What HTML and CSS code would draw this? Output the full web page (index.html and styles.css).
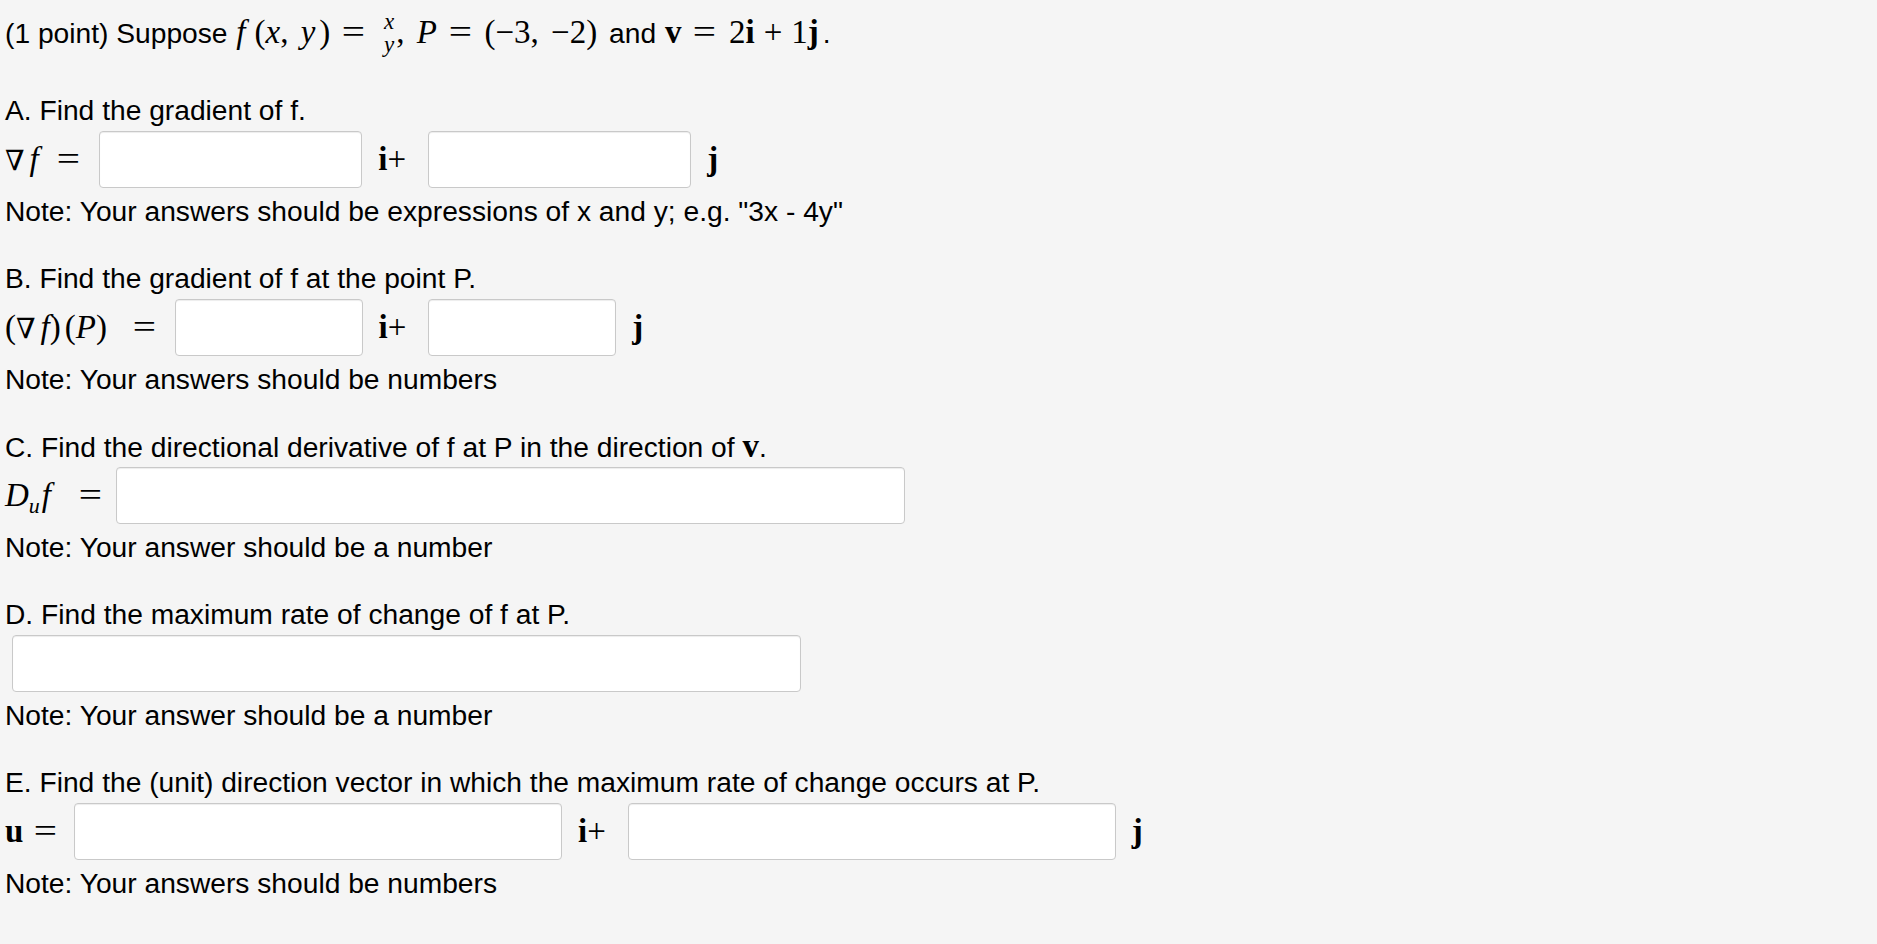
FILE: index.html
```html
<!DOCTYPE html>
<html>
<head>
<meta charset="utf-8">
<link rel="stylesheet" href="styles.css">
</head>
<body>
<div class="problem">
  <p class="title">(1 point) Suppose <span class="m"><i>f</i><span class="sp"></span>(<i>x</i>,<span class="cs"></span> <i class="ic">y</i>)<span class="rel">=</span><span class="frac"><span class="num"><i>x</i></span><span class="den"><i>y</i></span></span>,<span class="cs"></span> <i>P</i><span class="rel">=</span>(−3,<span class="cs"></span> −2)</span> and <span class="m"><b>v</b><span class="rel">=</span>2<b>i</b><span class="bin">+</span>1<b>j</b></span>.</p>

  <section class="part">
    <div class="q">A. Find the gradient of f.</div>
    <div class="row">
      <span class="m lab"><span class="nabla">∇</span><i>f</i><span class="rel r-a">=</span></span>
      <input class="ans w-a" type="text">
      <span class="m unit"><b>i</b>+</span>
      <input class="ans w-a" type="text">
      <span class="m unit"><b>j</b></span>
    </div>
    <div class="note">Note: Your answers should be expressions of x and y; e.g. "3x - 4y"</div>
  </section>

  <section class="part">
    <div class="q">B. Find the gradient of f at the point P.</div>
    <div class="row">
      <span class="m lab">(<span class="nabla">∇</span><i>f</i>)<span class="sp-s"></span>(<i>P</i>)<span class="rel r-b">=</span></span>
      <input class="ans w-b" type="text">
      <span class="m unit"><b>i</b>+</span>
      <input class="ans w-b" type="text">
      <span class="m unit"><b>j</b></span>
    </div>
    <div class="note">Note: Your answers should be numbers</div>
  </section>

  <section class="part">
    <div class="q">C. Find the directional derivative of f at P in the direction of <span class="m"><b>v</b></span>.</div>
    <div class="row">
      <span class="m lab"><i>D</i><sub><i>u</i></sub><i>f</i><span class="rel r-c">=</span></span>
      <input class="ans w-c" type="text">
    </div>
    <div class="note">Note: Your answer should be a number</div>
  </section>

  <section class="part">
    <div class="q">D. Find the maximum rate of change of f at P.</div>
    <div class="row">
      <input class="ans w-d" type="text">
    </div>
    <div class="note">Note: Your answer should be a number</div>
  </section>

  <section class="part">
    <div class="q">E. Find the (unit) direction vector in which the maximum rate of change occurs at P.</div>
    <div class="row">
      <span class="m lab"><b>u</b><span class="rel r-e">=</span></span>
      <input class="ans w-e" type="text">
      <span class="m unit"><b>i</b>+</span>
      <input class="ans w-e" type="text">
      <span class="m unit"><b>j</b></span>
    </div>
    <div class="note">Note: Your answers should be numbers</div>
  </section>
</div>
</body>
</html>
```

FILE: styles.css
```css
html, body {
  margin: 0;
  padding: 0;
  background: #f5f5f5;
}

body {
  font-family: "Liberation Sans", Arial, sans-serif;
  font-size: 28.2px;
  color: #000;
}

.problem {
  padding: 0 0 0 5px;
}

.title {
  margin: 0;
  padding-top: 12px;
  height: 83px;
  line-height: 36px;
}

.title .m {
  margin: 0 4px 0 1px;
}

.m {
  font-family: "Liberation Serif", "Times New Roman", serif;
  font-size: 33px;
}

.m i {
  font-style: italic;
}

.m b {
  font-weight: bold;
}

.ic {
  margin-right: 4px;
}

.nabla {
  font-family: "DejaVu Serif", "Liberation Serif", serif;
  font-size: 28px;
  font-weight: normal;
  margin-right: 5px;
}

.sp {
  display: inline-block;
  width: 9px;
}

.sp-s {
  display: inline-block;
  width: 4px;
}

.cs {
  display: inline-block;
  width: 4px;
}

.rel {
  display: inline-block;
  margin: 0 15px 0 14px;
  transform: scaleX(1.25);
}

.r-a { margin: 0 9px 0 20px; }
.r-b { margin: 0 8px 0 28px; }
.r-c { margin: 0 3px 0 30px; }
.r-e { margin: 0 6px 0 13px; }

.bin {
  display: inline-block;
  margin: 0 9px;
}

.frac {
  display: inline-flex;
  flex-direction: column;
  align-items: center;
  vertical-align: middle;
  font-size: 23px;
  line-height: 23px;
  margin: 0 2px 0 6px;
  position: relative;
  top: -2px;
}

.part {
  margin-bottom: 37px;
}

.q {
  height: 30px;
  line-height: 30px;
}

.row {
  display: flex;
  align-items: center;
  margin-top: 6px;
  height: 57px;
}

.lab {
  margin-right: 13px;
  white-space: nowrap;
}

.unit {
  margin: 0 22px 0 16px;
}

.ans {
  box-sizing: border-box;
  height: 57px;
  margin: 0;
  padding: 4px 8px;
  background: #fff;
  border: 1px solid #c9c9c9;
  border-radius: 4px;
  box-shadow: inset 0 1px 1px rgba(0, 0, 0, 0.075);
  font-size: 24px;
  outline: none;
}

.w-a { width: 263px; }
.w-b { width: 188px; }
.w-c { width: 789px; }
.w-d { width: 789px; margin-left: 7px; }
.w-e { width: 488px; }

sub {
  font-size: 22px;
  vertical-align: -7px;
  line-height: 0;
  margin-right: 2px;
}

.note {
  margin-top: 8px;
  height: 30px;
  line-height: 30px;
}
```
